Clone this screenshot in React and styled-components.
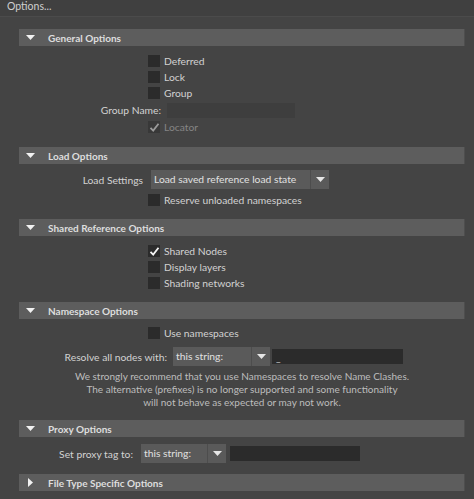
import styled, { createGlobalStyle } from 'styled-components';

const GlobalStyle = createGlobalStyle`
  html, body {
    margin: 0;
    padding: 0;
    background: #444444;
  }
  body {
    font-family: 'Lato', 'Liberation Sans', sans-serif;
    font-size: 10px;
    color: #d2d2d2;
  }
`;

const Page = styled.div`
  width: 474px;
  height: 499px;
  overflow: hidden;
  background: #444444;
  box-sizing: border-box;
`;

const Title = styled.div`
  height: 16px;
  line-height: 13px;
  padding-left: 7px;
  color: #cfcfcf;
  font-size: 10.5px;
  border-bottom: 1px solid #4b4b4b;
  background: #404040;
`;

const Frame = styled.div`
  padding: 12px 9px 0 19px;
  display: flex;
  flex-direction: column;
`;

const Header = styled.div`
  height: 17px;
  display: flex;
  align-items: center;
  background: #5d5d5d;
  border-right: 1px solid #4e4e4e;
  color: #dedede;
  font-weight: 700;
  font-size: 10px;

  svg {
    width: 29px;
    flex: none;
  }
`;

const Body = styled.div`
  display: flex;
  flex-direction: column;
  padding-top: ${({ $pt }) => $pt}px;
  padding-bottom: ${({ $pb }) => $pb}px;
`;

const CheckRow = styled.label`
  display: flex;
  align-items: center;
  height: 16px;
  padding-left: 129px;
  gap: 4px;
  color: ${({ $disabled }) => ($disabled ? '#858585' : '#d2d2d2')};
  font-size: 10.3px;
`;

const Box = styled.span`
  width: 12px;
  height: 12px;
  flex: none;
  display: flex;
  align-items: center;
  justify-content: center;
  background: ${({ $disabled }) => ($disabled ? '#383838' : '#2b2b2b')};

  svg {
    width: 11px;
    height: 11px;
  }
`;

const FieldRow = styled.div`
  display: flex;
  align-items: center;
  height: ${({ $h }) => $h}px;
  margin-top: ${({ $mt }) => $mt || 0}px;
  gap: ${({ $gap }) => $gap}px;
`;

const Label = styled.span`
  width: ${({ $w }) => $w}px;
  flex: none;
  text-align: right;
  color: #d2d2d2;
  font-size: 10.3px;
  padding-right: 4px;
  box-sizing: border-box;
  white-space: nowrap;
`;

const Dropdown = styled.div`
  width: ${({ $w }) => $w}px;
  height: 19px;
  flex: none;
  display: flex;
  background: #5a5a5a;
  color: #e0e0e0;
  font-size: 10.3px;
`;

const DropValue = styled.span`
  flex: 1;
  padding-left: 3px;
  line-height: 19px;
  white-space: nowrap;
  overflow: hidden;
`;

const DropArrow = styled.span`
  width: 18px;
  flex: none;
  display: flex;
  align-items: center;
  justify-content: center;
  border-left: 1px solid #4d4d4d;
`;

const TextField = styled.div`
  width: ${({ $w }) => $w}px;
  height: ${({ $h }) => $h || 15}px;
  flex: none;
  background: ${({ $tone }) => $tone || '#2b2b2b'};
  color: #d0d0d0;
  font-size: 10px;
  line-height: 17px;
  padding-left: 4px;
  box-sizing: border-box;
`;

const Note = styled.p`
  margin: 4px 0 0;
  text-align: center;
  line-height: 13px;
  color: #bdbdbd;
  font-size: 10px;
`;

const Triangle = ({ open }) => (
  <svg height="17" viewBox="0 0 29 17">
    {open ? (
      <polygon points="7,6 16,6 11.5,11" fill="#f2f2f2" />
    ) : (
      <polygon points="9,4 14,8.5 9,13" fill="#f2f2f2" />
    )}
  </svg>
);

const Section = ({ title, open = true }) => (
  <Header>
    <Triangle open={open} />
    {title}
  </Header>
);

const Check = ({ label, checked, disabled }) => (
  <CheckRow $disabled={disabled}>
    <Box $disabled={disabled}>
      {checked && (
        <svg viewBox="0 0 11 11">
          <polyline
            points="1.5,5.8 4.2,8.6 9.5,1.8"
            fill="none"
            stroke={disabled ? '#9a9a9a' : '#f4f4f4'}
            strokeWidth="1.8"
          />
        </svg>
      )}
    </Box>
    {label}
  </CheckRow>
);

const Select = ({ width, value }) => (
  <Dropdown $w={width}>
    <DropValue>{value}</DropValue>
    <DropArrow>
      <svg width="9" height="5" viewBox="0 0 9 5">
        <polygon points="0,0 9,0 4.5,5" fill="#e6e6e6" />
      </svg>
    </DropArrow>
  </Dropdown>
);

export default function App() {
  return (
    <Page>
      <GlobalStyle />
      <Title>Options...</Title>
      <Frame>
        <Section title="General Options" />
        <Body $pt={7} $pb={12}>
          <Check label="Deferred" />
          <Check label="Lock" />
          <Check label="Group" />
          <FieldRow $h={18} $gap={2}>
            <Label $w={146}>Group Name:</Label>
            <TextField $w={128} $tone="#3e3e3e" />
          </FieldRow>
          <Check label="Locator" checked disabled />
        </Body>

        <Section title="Load Options" />
        <Body $pt={6} $pb={11}>
          <FieldRow $h={19} $gap={4}>
            <Label $w={128}>Load Settings</Label>
            <Select width={178} value="Load saved reference load state" />
          </FieldRow>
          <FieldRow $h={3} $gap={0} />
          <Check label="Reserve unloaded namespaces" />
        </Body>

        <Section title="Shared Reference Options" />
        <Body $pt={7} $pb={11}>
          <Check label="Shared Nodes" checked />
          <Check label="Display layers" />
          <Check label="Shading networks" />
        </Body>

        <Section title="Namespace Options" />
        <Body $pt={6} $pb={11}>
          <Check label="Use namespaces" />
          <FieldRow $h={19} $mt={6} $gap={2}>
            <Label $w={152}>Resolve all nodes with:</Label>
            <Select width={97} value="this string:" />
            <TextField $w={131}>_</TextField>
          </FieldRow>
          <Note>
            We strongly recommend that you use Namespaces to resolve Name Clashes.
            <br />
            The alternative (prefixes) is no longer supported and some functionality
            <br />
            will not behave as expected or may not work.
          </Note>
        </Body>

        <Section title="Proxy Options" />
        <Body $pt={7} $pb={11}>
          <FieldRow $h={19} $gap={4}>
            <Label $w={118}>Set proxy tag to:</Label>
            <Select width={85} value="this string:" />
            <TextField $w={130} />
          </FieldRow>
        </Body>

        <Section title="File Type Specific Options" open={false} />
      </Frame>
    </Page>
  );
}
